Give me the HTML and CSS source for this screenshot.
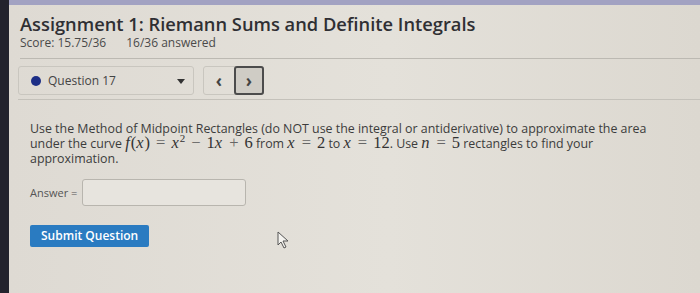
FILE: index.html
```html
<!DOCTYPE html>
<html>
<head lang="en">
    <meta charset="UTF-8">
    <title>Assignment 1</title>
    <link rel="stylesheet" href="styles.css">
</head>
<body>
    <div class="screen">
        <div class="topbar"></div>
        <div class="page">
            <h1 class="title">Assignment 1: Riemann Sums and Definite Integrals</h1>
            <div class="score">
                <span>Score: 15.75/36</span>
                <span>16/36 answered</span>
            </div>
            <div class="nav">
                <div class="select">
                    <span class="dot"></span>
                    <span class="qname">Question 17</span>
                    <span class="caret"></span>
                </div>
                <div class="arrows">
                    <span class="arrow">&lsaquo;</span>
                    <span class="arrow active">&rsaquo;</span>
                </div>
            </div>
            <div class="question">
                <p>Use the Method of Midpoint Rectangles (do NOT use the integral or antiderivative) to approximate the area<br>
                under the curve <span class="math"><i>f</i>(<i>x</i>)<b>=</b><i>x</i><sup>2</sup><b>&minus;</b>1<i>x</i><b>+</b>6</span> from <span class="math"><i>x</i><b>=</b>2</span> to <span class="math"><i>x</i><b>=</b>12</span>. Use <span class="math"><i>n</i><b>=</b>5</span> rectangles to find your<br>
                approximation.</p>
                <div class="answer">
                    <label>Answer =</label>
                    <span class="input"></span>
                </div>
                <div class="actions">
                    <span class="submit">Submit Question</span>
                    <svg class="cursor" width="14" height="18" viewBox="0 0 14 18">
                        <path d="M1 1 L1 14 L4 11 L7 17 L9 16 L6 10 L11 10 Z" fill="#f4f3ef" stroke="#555" stroke-width="1"/>
                    </svg>
                </div>
            </div>
        </div>
    </div>
</body>
</html>
```

FILE: styles.css
```css
* {
    margin: 0;
    padding: 0;
    box-sizing: border-box;
}
html, body {
    height: 100%;
}
body {
    font-family: "Open Sans", "DejaVu Sans", sans-serif;
    color: #3c3c3c;
    background: #23232d;
    overflow: hidden;
}
.screen {
    height: 100%;
    margin-left: 9px;
    background: linear-gradient(90deg, #dedad3 0%, #e4e1da 55%, #dcd8d0 100%);
}
.topbar {
    height: 5px;
    background: #a2a2c2;
}
.page {
    padding: 8px 0 0 11px;
}
.title {
    font-size: 18.3px;
    font-weight: 600;
    color: #2f2f33;
    line-height: 22px;
}
.score {
    display: flex;
    gap: 20px;
    font-size: 12px;
    color: #4a4a4a;
    line-height: 16px;
    padding-bottom: 7px;
    border-bottom: 1px solid #bcb9b2;
}
.nav {
    display: flex;
    gap: 9px;
    padding: 7px 0 4px 0;
    margin-left: -2px;
    border-bottom: 1px solid #c4c1ba;
    width: 690px;
}
.select {
    width: 176px;
    height: 29px;
    border: 1px solid #c9c6bf;
    border-radius: 3px;
    display: flex;
    align-items: center;
    padding-left: 12px;
    position: relative;
}
.dot {
    width: 10px;
    height: 10px;
    border-radius: 50%;
    background: #1d2e86;
}
.qname {
    font-size: 12px;
    margin-left: 7px;
    color: #444;
}
.caret {
    position: absolute;
    right: 8px;
    top: 12px;
    border-left: 4px solid transparent;
    border-right: 4px solid transparent;
    border-top: 5px solid #333;
}
.arrows {
    display: flex;
    border: 1px solid #c9c6bf;
    border-radius: 3px;
    height: 29px;
}
.arrow {
    width: 30px;
    display: flex;
    align-items: center;
    justify-content: center;
    font-size: 17px;
    font-weight: 700;
    color: #444;
}
.arrow.active {
    border: 2px solid #4c4c4c;
    border-radius: 3px;
    background: #cfccc5;
    margin: -1px -1px -1px 0;
}
.question {
    padding: 21px 0 0 10px;
}
.question p {
    font-size: 12.4px;
    line-height: 15px;
    white-space: nowrap;
    color: #3c3c3c;
}
.math {
    font-family: "Liberation Serif", "DejaVu Serif", serif;
    font-size: 16.5px;
    line-height: 14px;
    color: #333;
}
.math i {
    padding-right: 1px;
}
.math b {
    font-weight: 400;
    padding: 0 6px;
    color: #666;
}
.math sup {
    font-size: 11px;
    line-height: 0;
}
.answer {
    display: flex;
    align-items: center;
    gap: 5px;
    margin-top: 13px;
}
.answer label {
    font-size: 11px;
    color: #555;
}
.input {
    width: 164px;
    height: 27px;
    border: 1px solid #b8b5ae;
    border-radius: 3px;
    background: #e7e4de;
}
.actions {
    display: flex;
    align-items: center;
    margin-top: 17px;
}
.submit {
    background: #2a7bc1;
    color: #fff;
    font-size: 12px;
    font-weight: 600;
    padding: 2px 11px 3px 11px;
    border-radius: 2px;
}
.cursor {
    margin-left: 128px;
    margin-top: 8px;
}
```
